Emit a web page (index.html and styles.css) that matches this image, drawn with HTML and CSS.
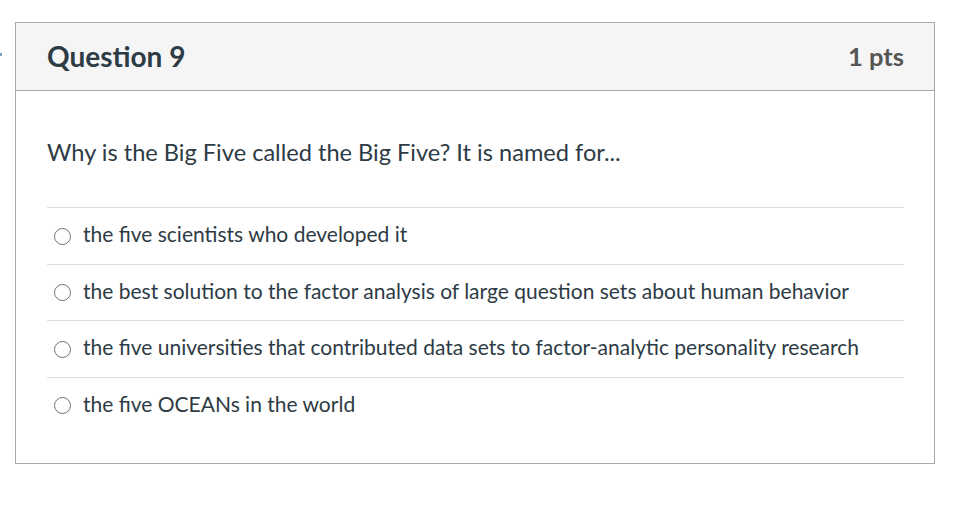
FILE: index.html
```html
<!DOCTYPE html>
<html>
<head>
<meta charset="utf-8">
<link rel="stylesheet" href="styles.css">
</head>
<body>
<div class="dot"></div>
<div class="card">
  <div class="header">
    <h2 class="title">Question 9</h2>
    <div class="pts">1 pts</div>
  </div>
  <div class="body">
    <p class="qtext">Why is the Big Five called the Big Five? It is named for...</p>
    <div class="answers">
      <label class="answer"><span class="radio"></span><span>the five scientists who developed it</span></label>
      <label class="answer"><span class="radio"></span><span>the best solution to the factor analysis of large question sets about human behavior</span></label>
      <label class="answer"><span class="radio"></span><span>the five universities that contributed data sets to factor-analytic personality research</span></label>
      <label class="answer"><span class="radio"></span><span>the five OCEANs in the world</span></label>
    </div>
  </div>
</div>
</body>
</html>
```
FILE: styles.css
```css
html, body { margin: 0; padding: 0; background: #fff; }
body { font-family: Lato, "Noto Sans", sans-serif; color: #2d3b45; position: relative; width: 962px; height: 506px; overflow: hidden; }
.dot { position: absolute; left: 0; top: 53px; width: 2px; height: 3px; background: #7a9cc0; }
.card { margin: 22px 0 0 15px; width: 918px; height: 440px; border: 1px solid #aaaaaa; box-sizing: content-box; }
.header { display: flex; justify-content: space-between; align-items: center; height: 65px; padding: 0 30px 2px 31px; background: #f5f5f5; border-bottom: 1px solid #aaaaaa; }
.title { margin: 0; font-size: 28px; font-weight: 700; color: #2d3b45; }
.pts { font-size: 25.5px; font-weight: 700; color: #555; }
.body { padding: 0 30px 0 31px; }
.qtext { margin: 0; padding-top: 46px; height: 70px; font-size: 23.6px; line-height: 30px; border-bottom: 1px solid #dddddd; box-sizing: content-box; }
.answers { display: flex; flex-direction: column; }
.answer { display: flex; align-items: center; gap: 12px; height: 51.5px; padding: 0 0 4px 7px; font-size: 21px; border-bottom: 1px solid #dddddd; }
.answer:last-child { border-bottom: none; }
.radio { width: 17px; height: 17px; margin-top: 5px; border: 1.5px solid #707070; border-radius: 50%; box-sizing: border-box; flex: none; }
```
